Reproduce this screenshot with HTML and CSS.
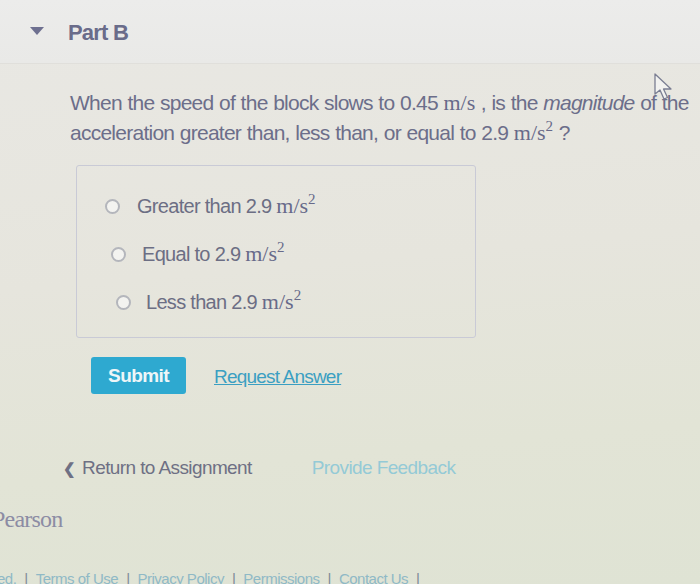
FILE: index.html
```html
<!DOCTYPE html>
<html>
<head>
<meta charset="utf-8">
<link rel="stylesheet" href="styles.css">
</head>
<body>
<div class="page">
  <header class="part-head">
    <span class="caret"></span>
    <h2 class="part-title">Part B</h2>
  </header>
  <section class="question">
    <p class="prompt">When the speed of the block slows to 0.45 <span class="math">m/s</span> , is the <i>magnitude</i> of the<br>acceleration greater than, less than, or equal to 2.9 <span class="math">m/s<sup>2</sup></span> ?</p>
    <div class="options">
      <label class="opt opt1"><span class="radio"></span><span>Greater than 2.9 <span class="math">m/s<sup>2</sup></span></span></label>
      <label class="opt opt2"><span class="radio"></span><span>Equal to 2.9 <span class="math">m/s<sup>2</sup></span></span></label>
      <label class="opt opt3"><span class="radio"></span><span>Less than 2.9 <span class="math">m/s<sup>2</sup></span></span></label>
    </div>
    <div class="actions">
      <button class="submit">Submit</button>
      <a class="request">Request Answer</a>
    </div>
  </section>
  <nav class="nav-row">
    <a class="return"><span class="chev">&#x276E;</span> Return to Assignment</a>
    <a class="feedback">Provide Feedback</a>
  </nav>
  <div class="brand">Pearson</div>
  <div class="footer">ed.<span class="sep">|</span>Terms of Use<span class="sep">|</span>Privacy Policy<span class="sep">|</span>Permissions<span class="sep">|</span>Contact Us<span class="sep">|</span></div>
  <svg class="cursor" width="30" height="30" viewBox="0 0 30 30">
    <path d="M4 2 L4 22 L9 18 L13 27 L16.5 25.5 L12.5 17 L20 17 Z" fill="#f2f2f0" stroke="#7a7e92" stroke-width="1.3" stroke-linejoin="round"/>
  </svg>
</div>
</body>
</html>
```
FILE: styles.css
```css
html, body {
  margin: 0;
  padding: 0;
}
body {
  width: 700px;
  height: 584px;
  overflow: hidden;
  font-family: "Liberation Sans", Arial, sans-serif;
  background: linear-gradient(175deg, #e9e8e4 0%, #e6e5dd 45%, #e2e4d6 75%, #dfe3d4 100%);
}
.page {
  position: relative;
  width: 700px;
  height: 584px;
}
.part-head {
  display: flex;
  align-items: center;
  height: 64px;
  padding-left: 30px;
  background: linear-gradient(180deg, #ececeb 0%, #e9e9e7 100%);
  border-bottom: 1px solid #e0dfdb;
  box-sizing: border-box;
  padding-top: 2px;
}
.caret {
  width: 0;
  height: 0;
  border-left: 7px solid transparent;
  border-right: 7px solid transparent;
  border-top: 8px solid #6e7090;
  margin-right: 24px;
  margin-bottom: 4px;
}
.part-title {
  margin: 0;
  font-size: 22px;
  font-weight: bold;
  color: #6a6c8a;
  letter-spacing: -0.8px;
}
.question {
  padding-left: 70px;
  padding-top: 24px;
}
.prompt {
  margin: 0;
  font-size: 21px;
  line-height: 30px;
  color: #6c6e8a;
  letter-spacing: -0.75px;
  word-spacing: 0.5px;
}
.prompt i { font-style: italic; }
.math {
  font-family: "Liberation Serif", "Times New Roman", serif;
  font-size: 22px;
  letter-spacing: 0;
  color: #676a8a;
}
.math sup {
  font-size: 15px;
  line-height: 0;
  vertical-align: 9px;
}
.options {
  margin-top: 17px;
  margin-left: 6px;
  width: 400px;
  height: 173px;
  border: 1px solid #c9cad6;
  border-radius: 3px;
  box-sizing: border-box;
  display: flex;
  flex-direction: column;
  padding-top: 27px;
  gap: 22px;
}
.opt {
  display: flex;
  align-items: center;
  gap: 17px;
  font-size: 20px;
  line-height: 25px;
  color: #6c6e84;
  letter-spacing: -0.7px;
}
.opt .math { font-size: 22px; }
.opt1 { padding-left: 28px; }
.opt2 { padding-left: 34px; gap: 16px; }
.opt3 { padding-left: 39px; gap: 15px; }
.radio {
  width: 11px;
  height: 11px;
  border: 2px solid #b4b6bc;
  border-radius: 50%;
  background: #f3f3f0;
  flex: none;
}
.actions {
  display: flex;
  align-items: center;
  margin-top: 19px;
  margin-left: 21px;
  gap: 28px;
}
.submit {
  width: 95px;
  height: 37px;
  border: none;
  border-radius: 3px;
  background: #2ea9d0;
  color: #eef6f8;
  font-family: "Liberation Sans", Arial, sans-serif;
  font-weight: bold;
  font-size: 19px;
  letter-spacing: -0.6px;
  padding: 0;
}
.request {
  font-size: 19px;
  color: #3b9fc2;
  text-decoration: underline;
  letter-spacing: -0.8px;
  margin-top: 2px;
}
.nav-row {
  display: flex;
  align-items: center;
  margin-top: 63px;
  padding-left: 63px;
  gap: 60px;
  font-size: 19px;
  letter-spacing: -0.6px;
}
.return {
  color: #6e7084;
}
.chev {
  font-size: 15px;
  color: #6e7084;
  font-weight: bold;
  margin-right: 2px;
}
.feedback {
  color: #94cad6;
}
.brand {
  margin-top: 27px;
  margin-left: -8px;
  font-family: "Liberation Serif", "Times New Roman", serif;
  font-size: 24px;
  color: #8c8ca4;
  letter-spacing: -0.8px;
}
.footer {
  margin-top: 37px;
  margin-left: -3px;
  font-size: 15px;
  color: #8fb9c6;
  white-space: nowrap;
  letter-spacing: -0.5px;
}
.sep {
  margin: 0 8px;
  color: #7f8a98;
}
.cursor {
  position: absolute;
  left: 651px;
  top: 72px;
}
```
